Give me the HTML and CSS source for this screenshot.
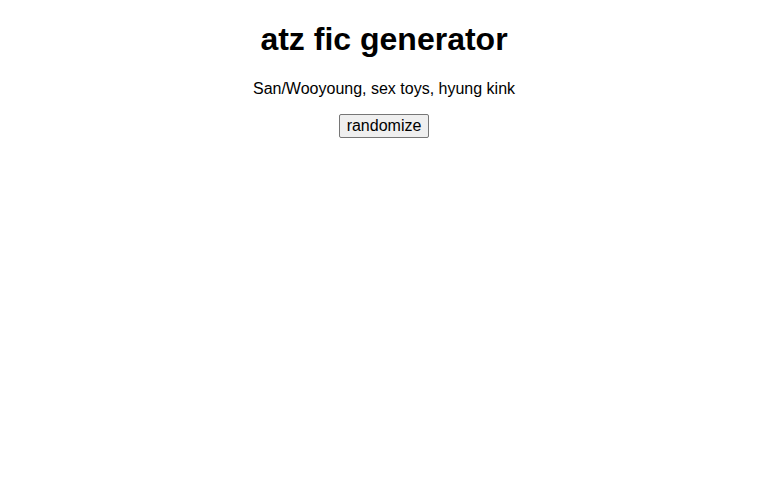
FILE: index.html
```html
<!DOCTYPE html>
<html lang="en">
  <head>
    <meta charset="UTF-8">
    <meta name="viewport" content="width=device-width, initial-scale=1.0">
    <title>atz fic generator</title>
    <link rel="stylesheet" href="styles.css">
  </head>
  <body>
    <div class="center">
      <h1>atz fic generator</h1>
      <p id="result">San/Wooyoung, sex toys, hyung kink</p>
      <button type="button" id="btn" class="rand">randomize</button>
    </div>
  </body>
</html>
```
FILE: styles.css
```css
body {
  margin: 0 8px;
  font-family: "Liberation Sans", Arial, sans-serif;
}

.center {
  text-align: center;
}

h1 {
  font-size: 32px;
}

p {
  font-size: 16px;
}

.rand {
  font-family: "Liberation Sans", Arial, sans-serif;
  font-size: 16px;
  padding: 2px 7px;
  background: #efefef;
  border: 1px solid #767676;
  border-radius: 2px;
  color: #000;
}
```
